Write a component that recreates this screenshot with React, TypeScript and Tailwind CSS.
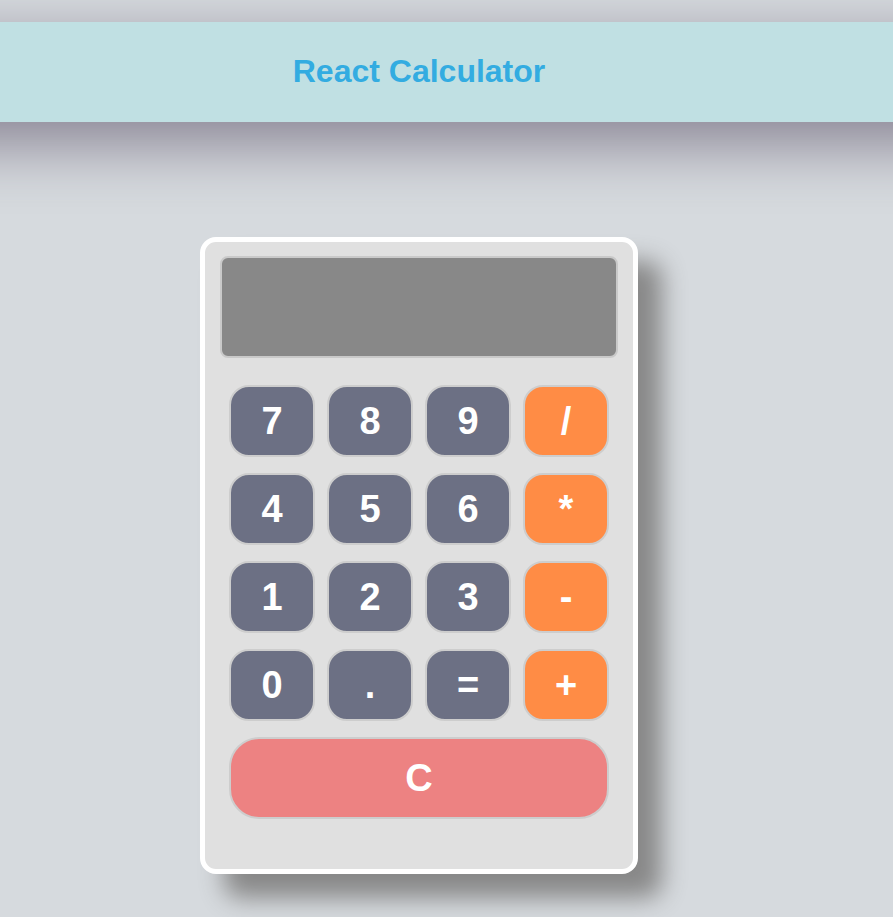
import React, { useState } from "react";

const keys: { label: string; kind: "num" | "op" }[] = [
    { label: "7", kind: "num" },
    { label: "8", kind: "num" },
    { label: "9", kind: "num" },
    { label: "/", kind: "op" },
    { label: "4", kind: "num" },
    { label: "5", kind: "num" },
    { label: "6", kind: "num" },
    { label: "*", kind: "op" },
    { label: "1", kind: "num" },
    { label: "2", kind: "num" },
    { label: "3", kind: "num" },
    { label: "-", kind: "op" },
    { label: "0", kind: "num" },
    { label: ".", kind: "num" },
    { label: "=", kind: "num" },
    { label: "+", kind: "op" }
];

const App: React.FC = () => {
    const [value, setValue] = useState("");

    const press = (label: string) => {
        if (label === "=") {
            try {
                // eslint-disable-next-line no-new-func
                setValue(String(Function(`return (${value})`)()));
            } catch {
                setValue("Error");
            }
            return;
        }
        setValue(v => v + label);
    };

    return (
        <div className="min-h-screen overflow-x-hidden bg-[#d6dade] pt-[22px] font-['Liberation_Sans',Arial,sans-serif]">
            {/* header is widened past the window so its shadow stays even at the edges */}
            <header className="relative -mx-[120px] flex h-[100px] items-center bg-[#c0e0e3] px-[120px] pb-[2px] shadow-[0_21px_64px_#878292]">
                <div className="w-[838px] text-center">
                    <h1 className="text-[32px] font-bold leading-none text-[#33ace1]">React Calculator</h1>
                </div>
            </header>

            <div className="mt-[115px] flex w-[838px] justify-center">
                <div className="w-[438px] rounded-[16px] border-[5px] border-white bg-[#e0e0e0] px-[15px] pt-[14px] pb-[50px] shadow-[24px_24px_24px_#888888]">
                    <div className="flex h-[102px] items-center justify-end overflow-hidden rounded-[8px] border-2 border-[#c9c9c9] bg-[#888888] px-4 text-[40px] font-bold text-white">
                        {value}
                    </div>

                    <div className="mx-[9px] mt-[27px] grid grid-cols-4 gap-x-[12px] gap-y-[16px]">
                        {keys.map(k => (
                            <button
                                key={k.label}
                                onClick={() => press(k.label)}
                                className={
                                    k.kind === "op"
                                        ? "flex h-[72px] items-center justify-center rounded-[20px] border-2 border-[#cdcdcd] bg-[#ff8c45] text-[38px] font-bold leading-none text-white"
                                        : "flex h-[72px] items-center justify-center rounded-[20px] border-2 border-[#cdcdcd] bg-[#6c7084] text-[38px] font-bold leading-none text-white"
                                }
                            >
                                {k.label}
                            </button>
                        ))}
                        <button
                            onClick={() => setValue("")}
                            className="col-span-4 flex h-[82px] items-center justify-center rounded-[30px] border-2 border-[#cdcdcd] bg-[#ed8282] text-[38px] font-bold leading-none text-white"
                        >
                            C
                        </button>
                    </div>
                </div>
            </div>
        </div>
    );
};

export default App;
